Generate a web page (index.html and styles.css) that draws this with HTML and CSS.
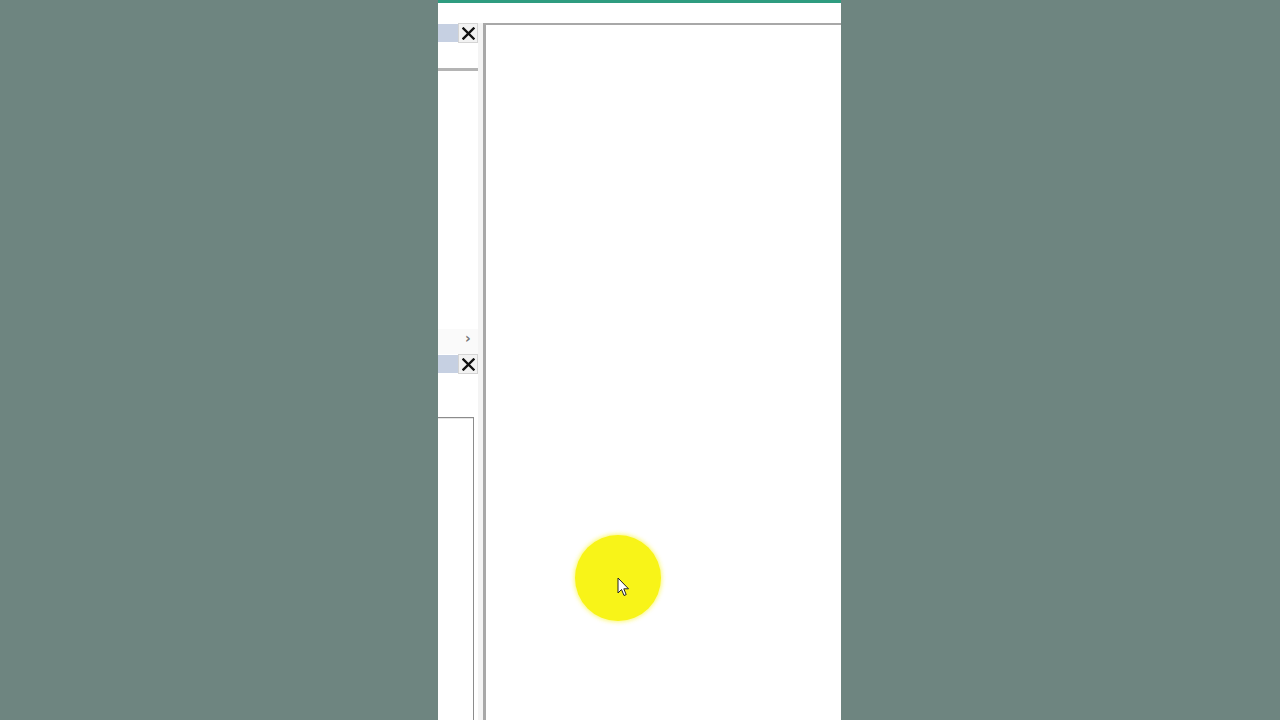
FILE: index.html
```html
<!DOCTYPE html>
<html>
<head>
<meta charset="utf-8">
<link rel="stylesheet" href="styles.css">
</head>
<body>
<div class="screen">
  <div class="topline"></div>
  <div class="topgap"></div>
  <div class="work">
    <div class="leftcol">
      <div class="titlebar"><div class="fill"></div><div class="closebtn"><svg width="13" height="13" viewBox="0 0 13 13"><path d="M1.5 1.5 L11.5 11.5 M11.5 1.5 L1.5 11.5" stroke="#111" stroke-width="2.4" stroke-linecap="square"/></svg></div></div>
      <div class="blank1"></div>
      <div class="rule"></div>
      <div class="blank2"></div>
      <div class="chevrow"><span class="chev">›</span></div>
      <div class="titlebar second"><div class="fill"></div><div class="closebtn"><svg width="13" height="13" viewBox="0 0 13 13"><path d="M1.5 1.5 L11.5 11.5 M11.5 1.5 L1.5 11.5" stroke="#111" stroke-width="2.4" stroke-linecap="square"/></svg></div></div>
      <div class="blank3"></div>
      <div class="box"></div>
    </div>
    <div class="gutter"></div>
    <div class="rightpanel"></div>
  </div>
  <div class="spot">
    <svg class="cursor" width="13" height="20" viewBox="0 0 13 20">
      <path d="M1 1 L1 16 L4.5 12.5 L7 18.5 L9.2 17.6 L6.8 11.8 L11.5 11.8 Z" fill="#fff" stroke="#222" stroke-width="1" stroke-linejoin="round"/>
    </svg>
  </div>
</div>
</body>
</html>
```
FILE: styles.css
```css
html, body {
  margin: 0;
  padding: 0;
  height: 100%;
}
body {
  background: #6e8580;
  overflow: hidden;
  font-family: "Liberation Sans", Arial, sans-serif;
}
.screen {
  position: relative;
  margin-left: 438px;
  width: 403px;
  height: 720px;
  background: #ffffff;
  display: flex;
  flex-direction: column;
}
.topline {
  height: 3px;
  background: #2f9c80;
  flex: none;
}
.topgap {
  height: 20px;
  flex: none;
}
.work {
  flex: 1;
  display: flex;
  min-height: 0;
}
.leftcol {
  width: 40px;
  display: flex;
  flex-direction: column;
  flex: none;
}
.titlebar {
  height: 20px;
  display: flex;
  flex: none;
}
.titlebar .fill {
  flex: 1;
  background: #c6d0e2;
  margin: 1px 0;
}
.closebtn {
  width: 20px;
  height: 20px;
  background: #f2f2f2;
  border: 1px solid #d4d4d4;
  box-sizing: border-box;
  display: flex;
  align-items: center;
  justify-content: center;
}
.blank1 { height: 25px; flex: none; }
.rule {
  height: 3px;
  background: #b4b4b4;
  flex: none;
}
.blank2 { height: 258px; flex: none; }
.chevrow {
  height: 25px;
  flex: none;
  background: #fafafa;
  position: relative;
}
.chev {
  position: absolute;
  left: 27px;
  top: 1px;
  font-size: 14px;
  color: #777;
  font-family: "DejaVu Sans", sans-serif;
  font-weight: bold;
}
.blank3 { height: 43px; flex: none; }
.box {
  flex: 1;
  border-top: 1px solid #8c8c8c;
  border-right: 1px solid #8c8c8c;
  box-shadow: inset 0 1px 0 #e6e6e6;
  margin-right: 4px;
}
.gutter {
  width: 5px;
  background: #f4f4f4;
  flex: none;
}
.rightpanel {
  flex: 1;
  border-left: 3px solid #a8a8a8;
  border-top: 2px solid #a8a8a8;
  background: #fff;
}
.spot {
  position: absolute;
  left: 575px;
  left: 137px;
  top: 535px;
  width: 86px;
  height: 86px;
  border-radius: 50%;
  background: #f8f418;
  box-shadow: 0 0 4px 1px rgba(248, 244, 24, 0.6);
}
.cursor {
  position: absolute;
  left: 42px;
  top: 42px;
}
```
